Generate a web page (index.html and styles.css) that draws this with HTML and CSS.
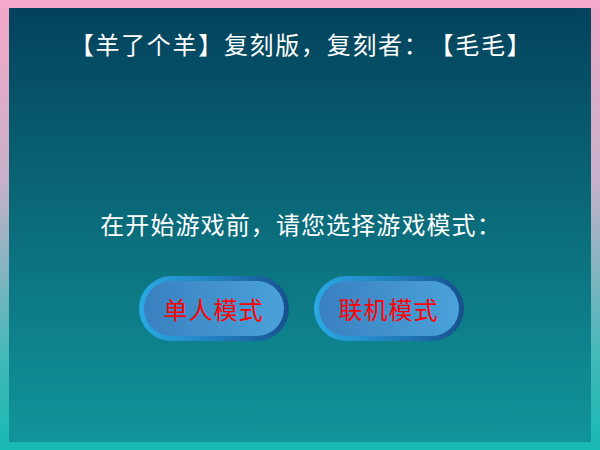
FILE: index.html
```html
<!DOCTYPE html>
<html>
<head>
<meta charset="utf-8">
<link rel="stylesheet" href="styles.css">
</head>
<body>
<div class="frame">
  <div class="stage">
    <h1 class="title">【羊了个羊】复刻版，复刻者：【毛毛】</h1>
    <p class="prompt">在开始游戏前，请您选择游戏模式：</p>
    <div class="modes">
      <button class="mode">单人模式</button>
      <button class="mode">联机模式</button>
    </div>
  </div>
</div>
</body>
</html>
```
FILE: styles.css
```css
html, body {
  margin: 0;
  padding: 0;
}
body {
  width: 600px;
  height: 450px;
  overflow: hidden;
  font-family: "Noto Sans CJK SC", "Noto Sans", sans-serif;
}
.frame {
  box-sizing: border-box;
  width: 600px;
  height: 450px;
  padding: 8px 9px 8px 9px;
  background: linear-gradient(to bottom, #f6a8c9 0%, #c8b0c8 40%, #40b8b8 80%, #18b9b3 100%);
}
.stage {
  height: 100%;
  background: linear-gradient(to bottom, #03425c 0%, #0a6878 45%, #11959a 100%);
  display: flex;
  flex-direction: column;
  align-items: center;
  color: #ffffff;
}
.title {
  margin: 18px 0 0 0;
  font-size: 24px;
  font-weight: normal;
  line-height: 36px;
  text-spacing-trim: space-all;
  letter-spacing: 1.7px;
  padding-left: 2px;
}
.prompt {
  margin: 144px 0 0 0;
  font-size: 24px;
  line-height: 36px;
  text-spacing-trim: space-all;
  letter-spacing: 1.1px;
  padding-left: 2px;
}
.modes {
  margin-top: 34px;
  display: flex;
  gap: 25px;
  padding-left: 2px;
}
.mode {
  box-sizing: border-box;
  width: 150px;
  height: 65px;
  border: 5px solid transparent;
  border-radius: 33px;
  background:
    linear-gradient(to right, #3a80c0, #4aa2da) padding-box,
    linear-gradient(to right, #2aaae4, #1f78b8 60%, #16508c) border-box;
  color: #ff0000;
  font-family: "Noto Sans CJK SC", "Noto Sans", sans-serif;
  font-size: 24px;
  line-height: 1;
  letter-spacing: 1px;
  padding: 0;
  cursor: pointer;
}
```
